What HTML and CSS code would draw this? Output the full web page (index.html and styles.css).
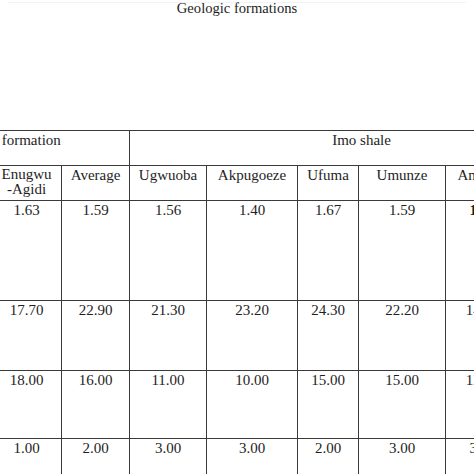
FILE: index.html
```html
<!DOCTYPE html>
<html>
<head>
<meta charset="utf-8">
<link rel="stylesheet" href="styles.css">
</head>
<body>
<div class="page">
  <div class="topline"></div>
  <h1 class="title">Geologic formations</h1>
  <div class="table-wrap">
    <table class="data">
      <colgroup>
        <col class="c0"><col class="c1"><col class="c2"><col class="c3"><col class="c4"><col class="c5"><col class="c6"><col class="c7"><col class="c8">
      </colgroup>
      <tr class="h1">
        <th colspan="3" class="grp">Ameki formation</th>
        <th colspan="6" class="grp">Imo shale</th>
      </tr>
      <tr class="h2">
        <th>Ameki</th>
        <th class="two"><span class="ln">Enugwu</span><span class="ln">-Agidi</span></th>
        <th>Average</th>
        <th>Ugwuoba</th>
        <th>Akpugoeze</th>
        <th>Ufuma</th>
        <th>Umunze</th>
        <th>Amaeke</th>
        <th>Average</th>
      </tr>
      <tr class="r1">
        <td>1.55</td><td>1.63</td><td>1.59</td><td>1.56</td><td>1.40</td><td>1.67</td><td>1.59</td><td><b>1.52</b></td><td>1.55</td>
      </tr>
      <tr class="r2">
        <td>28.10</td><td>17.70</td><td>22.90</td><td>21.30</td><td>23.20</td><td>24.30</td><td>22.20</td><td>14.60</td><td>21.00</td>
      </tr>
      <tr class="r3">
        <td>14.00</td><td>18.00</td><td>16.00</td><td>11.00</td><td>10.00</td><td>15.00</td><td>15.00</td><td>12.00</td><td>13.00</td>
      </tr>
      <tr class="r4">
        <td>3.00</td><td>1.00</td><td>2.00</td><td>3.00</td><td>3.00</td><td>2.00</td><td>3.00</td><td>3.00</td><td>3.00</td>
      </tr>
    </table>
  </div>
</div>
</body>
</html>
```
FILE: styles.css
```css
html, body {
  margin: 0;
  padding: 0;
  background: #ffffff;
}
.page {
  width: 474px;
  height: 474px;
  overflow: hidden;
  font-family: "Liberation Serif", "Times New Roman", serif;
  color: #1e1e1e;
}
.topline {
  height: 1px;
  margin: 2px 8px 0 8px;
  background: #f3f3f3;
}
.title {
  margin: -3px 0 0 0;
  font-weight: normal;
  font-size: 14.6px;
  line-height: 17px;
  text-align: center;
  color: #1e1e1e;
}
.table-wrap {
  margin-top: 113px;
  margin-left: -112px;
}
.data {
  border-collapse: collapse;
  table-layout: fixed;
  width: 705px;
  font-size: 15px;
  line-height: 15px;
}
.c0 { width: 103px; }
.c1 { width: 70px; }
.c2 { width: 68px; }
.c3 { width: 77px; }
.c4 { width: 91px; }
.c5 { width: 61px; }
.c6 { width: 87px; }
.c7 { width: 74px; }
.c8 { width: 74px; }
.data th, .data td {
  border: 1.5px solid #3a3a3a;
  padding: 2px 1px 0 1px;
  vertical-align: top;
  text-align: center;
  font-weight: normal;
}
.data th.two {
  padding-top: 1px;
}
.ln {
  display: block;
  line-height: 15px;
}
.h1 { height: 35px; }
.h2 { height: 35px; }
.r1 { height: 100px; }
.r2 { height: 70px; }
.r3 { height: 68px; }
.r4 { height: 70px; }
```
